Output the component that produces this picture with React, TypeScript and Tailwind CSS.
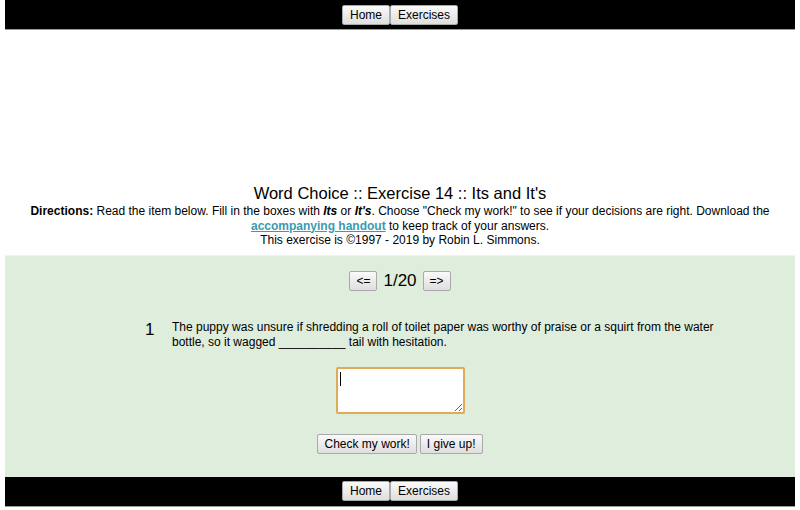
import React from 'react';

const navBtn =
  'h-[20px] px-[7px] text-[12px] leading-none text-black bg-gradient-to-b from-[#fafafa] to-[#dedede] border border-[#a9a9a9] rounded-[2px]';

const NavButtons: React.FC = () => (
  <div className="flex">
    <button className={navBtn}>Home</button>
    <button className={navBtn}>Exercises</button>
  </div>
);

const NavBar: React.FC = () => (
  <div className="mx-[5px] h-[30px] bg-black border-b border-[#9a9a9a] flex items-center justify-center">
    <NavButtons />
  </div>
);

const btn =
  'h-[20px] px-[6px] text-[12px] leading-none text-black bg-gradient-to-b from-[#fafafa] to-[#dedede] border border-[#a9a9a9] rounded-[2px]';

export default function App() {
  return (
    <div className="w-[800px] h-[510px] bg-white font-['Liberation_Sans',Arial,sans-serif] text-black overflow-hidden">
      <NavBar />

      {/* ad space */}
      <div className="h-[153px]" />

      <div className="text-center">
        <h1 className="text-[16.5px] leading-[21px]">Word Choice :: Exercise 14 :: Its and It's</h1>
        <p className="text-[12px] leading-[14.5px] px-[20px]">
          <b>Directions:</b> Read the item below. Fill in the boxes with <b><i>Its</i></b> or{' '}
          <b><i>It's</i></b>. Choose "Check my work!" to see if your decisions are right. Download the{' '}
          <a className="font-bold underline text-[#3a9bb0]">accompanying handout</a> to keep track of your answers.
          <br />
          This exercise is ©1997 - 2019 by Robin L. Simmons.
        </p>
      </div>

      <div className="mx-[5px] mt-[7px] h-[222px] bg-[#dfeddc] border-t border-[#eef6ec] flex flex-col items-center">
        <div className="mt-[15px] flex items-center gap-[6px]">
          <button className={btn}>&lt;=</button>
          <span className="text-[17px] leading-none">1/20</span>
          <button className={btn}>=&gt;</button>
        </div>

        <div className="mt-[29px] w-full flex">
          <span className="ml-[140px] w-[27px] pt-[1px] text-[17px] leading-none">1</span>
          <p className="w-[560px] text-[12px] leading-[15px]">
            The puppy was unsure if shredding a roll of toilet paper was worthy of praise or a squirt from the water
            bottle, so it wagged __________ tail with hesitation.
          </p>
        </div>

        <div className="relative mt-[17px]">
          <textarea className="block w-[129px] h-[47px] bg-white border-2 border-[#e0ab57] rounded-[2px] resize-y outline-none" />
          <span className="absolute left-[4px] top-[5px] w-[1px] h-[14px] bg-black" />
        </div>

        <div className="mt-[20px] flex gap-[3px]">
          <button className={btn}>Check my work!</button>
          <button className={btn}>I give up!</button>
        </div>
      </div>

      <NavBar />
    </div>
  );
}
